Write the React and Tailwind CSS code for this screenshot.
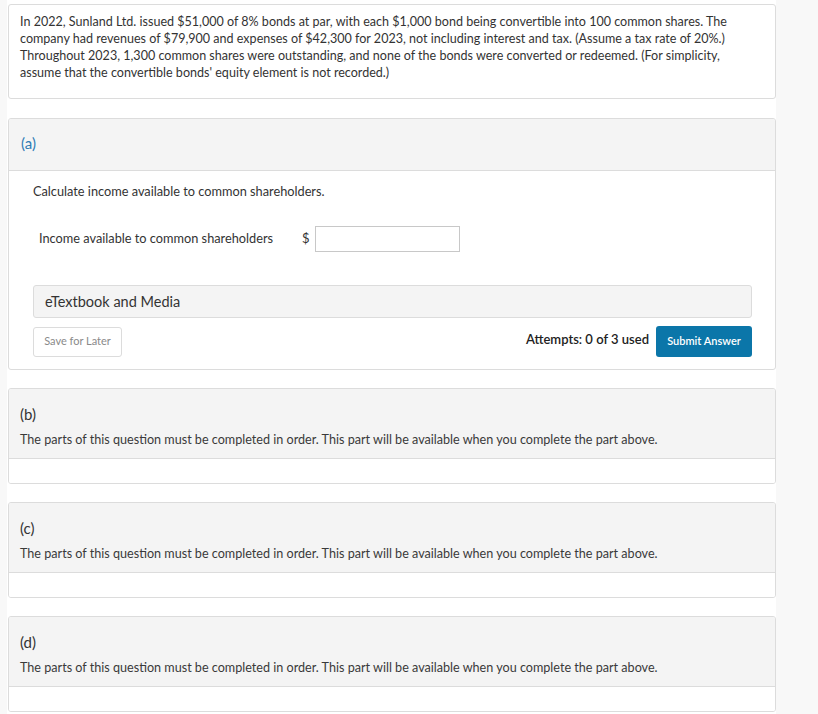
import React from "react"

const lockedParts = ["(b)", "(c)", "(d)"]

function LockedPart({ label }) {
  return (
    <div className="mt-[18px] border border-[#dcdcdc] rounded-[3px] overflow-hidden">
      <div className="bg-[#f4f4f4] border-b border-[#dcdcdc] pl-[11px] pt-[15px] pb-[10px]">
        <div className="text-[15px] leading-[20px] text-[#333]">{label}</div>
        <p className="mt-[7px] text-[12.6px] leading-[17px] text-[#3a3a3a]">
          The parts of this question must be completed in order. This part will be available when you complete the part above.
        </p>
      </div>
      <div className="h-[24px] bg-white" />
    </div>
  )
}

export default function App() {
  return (
    <div className="min-h-screen bg-[#f8f8f8] font-['Lato','Noto_Sans',sans-serif]">
      <div className="ml-[7px] w-[769px] min-h-screen bg-white pl-px pt-[4px] pb-[4px]">
        {/* problem statement */}
        <div className="w-[768px] border border-[#dcdcdc] rounded-[3px] pl-[11px] pr-4 pt-[8px] pb-[17px]">
          <p className="text-[12.55px] leading-[17px] text-[#333]">
            In 2022, Sunland Ltd. issued $51,000 of 8% bonds at par, with each $1,000 bond being convertible into 100 common shares. The
            company had revenues of $79,900 and expenses of $42,300 for 2023, not including interest and tax. (Assume a tax rate of 20%.)
            Throughout 2023, 1,300 common shares were outstanding, and none of the bonds were converted or redeemed. (For simplicity,
            assume that the convertible bonds' equity element is not recorded.)
          </p>
        </div>

        {/* part (a) */}
        <div className="w-[768px] mt-[19px] border border-[#dcdcdc] rounded-[3px] overflow-hidden">
          <div className="bg-[#f4f4f4] border-b border-[#dcdcdc] pl-3 pt-[14px] pb-[17px]">
            <div className="text-[15px] leading-[20px] text-[#2f7cb5]">(a)</div>
          </div>
          <div className="pl-6 pr-[23px] pt-3 pb-[12px]">
            <p className="text-[12.75px] leading-[17px] text-[#333]">Calculate income available to common shareholders.</p>
            <div className="mt-[26px] flex items-center h-[26px] pl-[6px]">
              <span className="text-[12.75px] text-[#333] w-[263px]">Income available to common shareholders</span>
              <span className="text-[13px] text-[#333] w-[13px]">$</span>
              <input
                type="text"
                className="w-[145px] h-[26px] border border-[#c8c8c8] bg-white outline-none"
              />
            </div>
            <div className="mt-[33px] h-[33px] flex items-center bg-[#f4f4f4] border border-[#dcdcdc] rounded-[3px] pl-[11px] text-[14.5px] text-[#333]">
              eTextbook and Media
            </div>
            <div className="mt-2 flex items-center">
              <button className="w-[89px] h-[30px] border border-[#dcdcdc] rounded-[3px] bg-white text-[11px] text-[#8a8a8a]">
                Save for Later
              </button>
              <div className="ml-auto flex items-center gap-[7px]">
                <span className="text-[13px] font-semibold text-[#222] -mt-[3px]">Attempts: 0 of 3 used</span>
                <button className="w-[96px] h-[31px] rounded-[3px] bg-[#0b76a9] text-white text-[11px] font-semibold">
                  Submit Answer
                </button>
              </div>
            </div>
          </div>
        </div>

        {lockedParts.map((label) => (
          <div key={label} className="w-[768px]">
            <LockedPart label={label} />
          </div>
        ))}
      </div>
    </div>
  )
}
